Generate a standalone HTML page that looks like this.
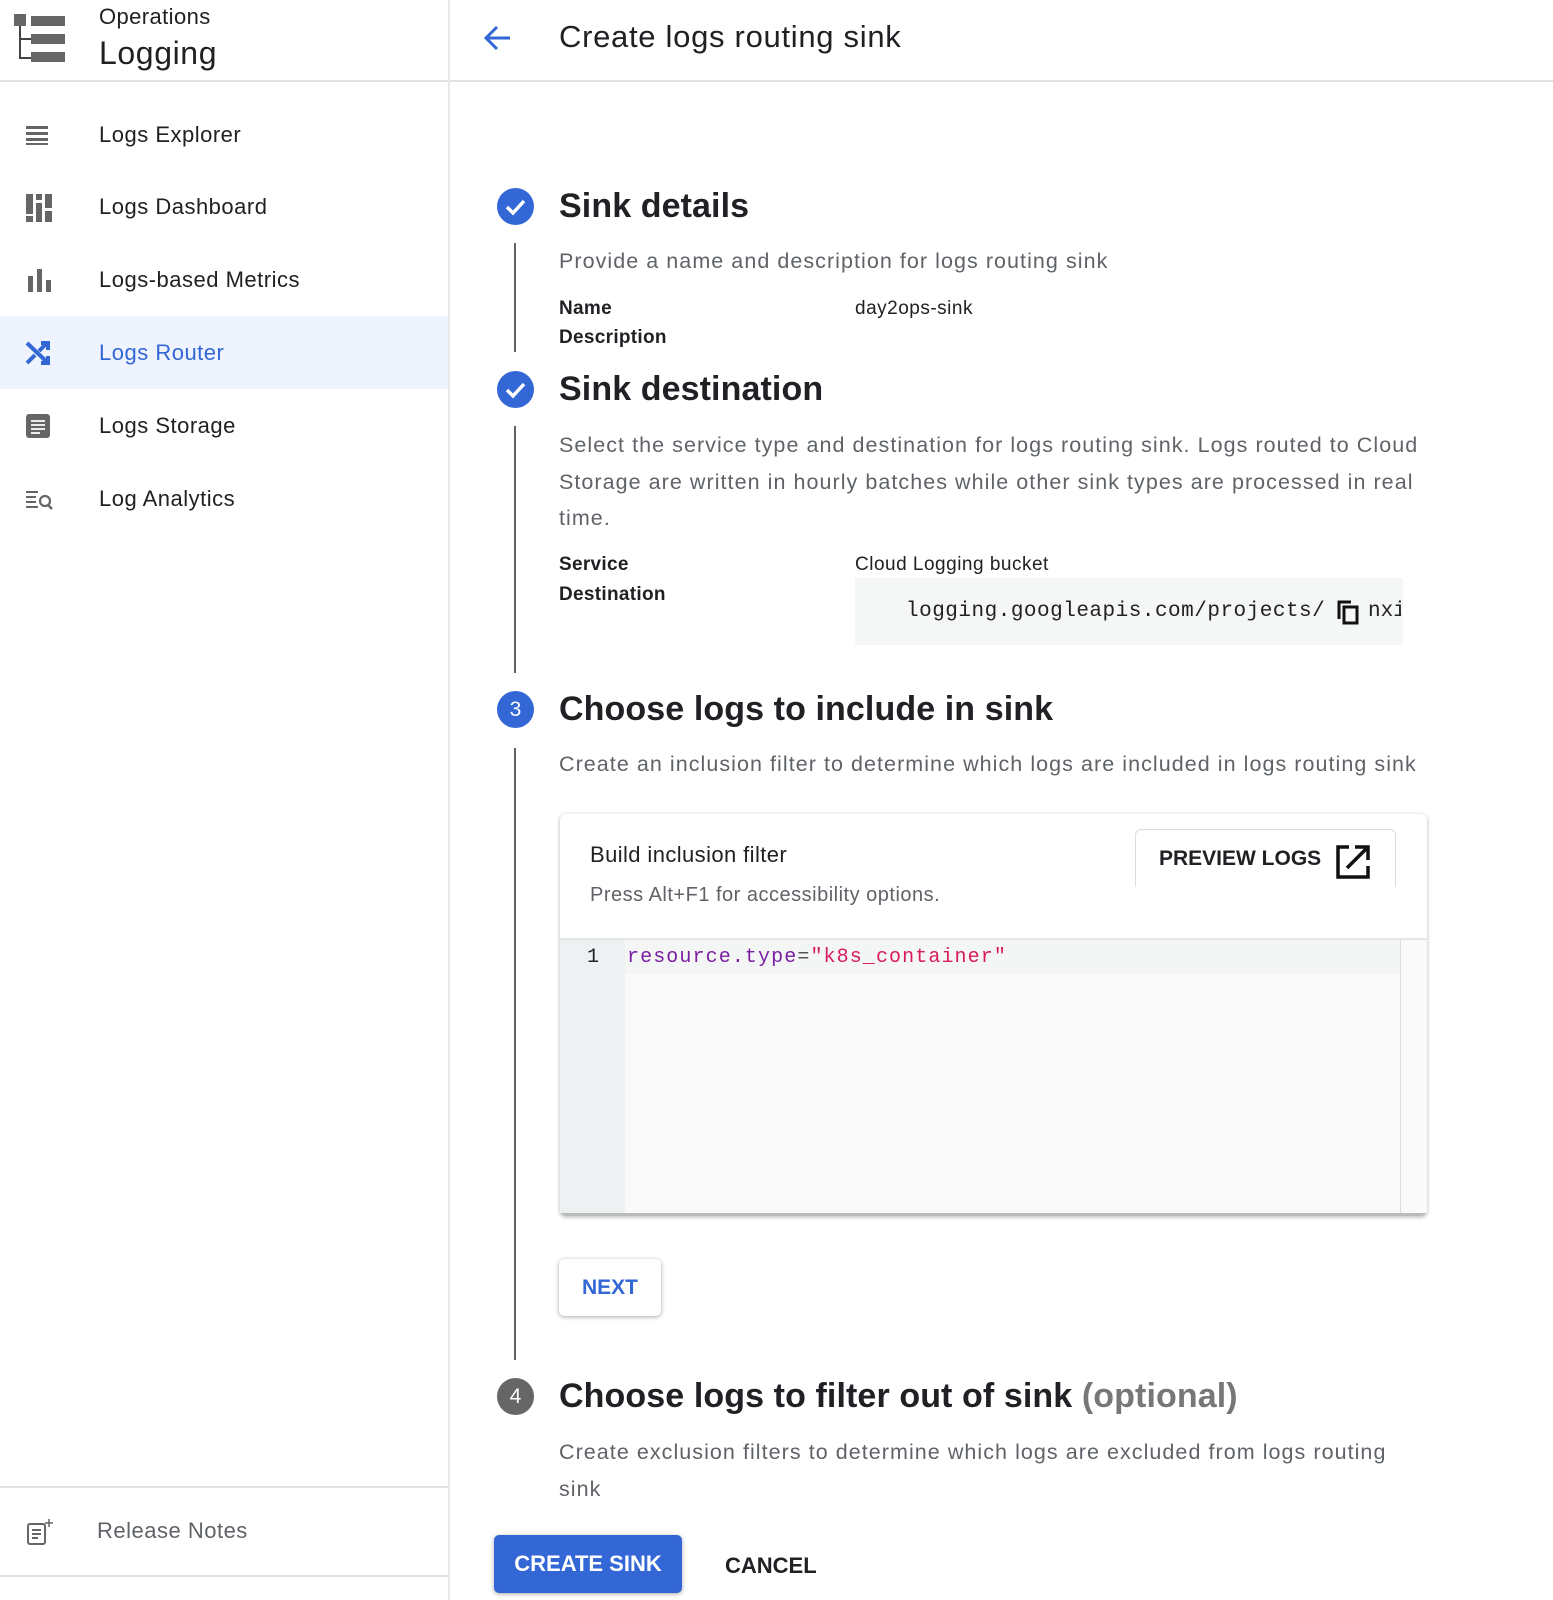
<!DOCTYPE html>
<html><head><meta charset="utf-8"><style>
*{margin:0;padding:0;box-sizing:border-box}
body{width:1553px;height:1600px;background:#fff;font-family:"Liberation Sans",sans-serif;color:#202124;position:relative;overflow:hidden}
.a{position:absolute;white-space:nowrap}
.nav{position:absolute;left:0;width:448px;height:73px;font-size:22px;letter-spacing:0.5px}
.nav span{position:absolute;left:99px;top:50%;transform:translateY(-50%)}
.nav svg{position:absolute;left:24px;top:50%;transform:translateY(-50%)}
.h{font-size:34px;font-weight:bold;color:#202124;letter-spacing:0.1px}
.p{font-size:21.5px;color:#5f6368;letter-spacing:1.05px}
.l{font-size:19px;font-weight:bold;color:#202124;letter-spacing:0.3px}
.v{font-size:19px;color:#202124;letter-spacing:0.5px}
.circ{position:absolute;width:37px;height:37px;border-radius:50%;background:#3367d6;left:497px}
.vl{position:absolute;left:514px;width:1.5px;background:#5f6368}
</style></head><body>
<div class="a" style="left:0;top:0;width:1553px;height:82px;border-bottom:2px solid #e0e0e0"></div>
<div class="a" style="left:448px;top:0;width:2px;height:1600px;background:#e8e8e8"></div>
<svg class="a" style="left:14px;top:14px" width="52" height="50"><rect x="0" y="0" width="12" height="12" fill="#666"/><rect x="17" y="2" width="34" height="10" fill="#666"/><rect x="17" y="20" width="34" height="10" fill="#666"/><rect x="17" y="38" width="34" height="10" fill="#666"/><path d="M6 12V44H17M6 25H17" stroke="#444" stroke-width="2" fill="none"/></svg>
<div class="a" style="left:99px;top:4px;font-size:22px;letter-spacing:0.4px">Operations</div>
<div class="a" style="left:99px;top:35px;font-size:32px;letter-spacing:0.6px">Logging</div>
<svg class="a" style="left:482px;top:24px" width="32" height="28"><path d="M28 14H5M15 3L4 14L15 25" stroke="#3367d6" stroke-width="3" fill="none"/></svg>
<div class="a" style="left:559px;top:19px;font-size:31px;letter-spacing:0.7px">Create logs routing sink</div>

<div class="nav" style="top:98px"><svg width="26" height="22"><rect x="2" y="2" width="22" height="3" fill="#666"/><rect x="2" y="8" width="22" height="3" fill="#666"/><rect x="2" y="14" width="22" height="3" fill="#666"/><rect x="2" y="19" width="22" height="2" fill="#666"/></svg><span>Logs Explorer</span></div>
<div class="nav" style="top:170px"><svg width="30" height="30"><rect x="2" y="2" width="7" height="20" fill="#666"/><rect x="2" y="24" width="7" height="6" fill="#666"/><rect x="12" y="2" width="6" height="6" fill="#666"/><rect x="12" y="11" width="6" height="19" fill="#666"/><rect x="21" y="2" width="7" height="14" fill="#666"/><rect x="21" y="19" width="7" height="11" fill="#666"/></svg><span>Logs Dashboard</span></div>
<div class="nav" style="top:243px"><svg width="28" height="24"><rect x="4" y="8" width="5" height="16" fill="#666"/><rect x="13" y="1" width="5" height="23" fill="#666"/><rect x="22" y="12" width="5" height="12" fill="#666"/></svg><span>Logs-based Metrics</span></div>
<div class="nav" style="top:316px;background:#eef3fd;color:#3367d6"><svg width="28" height="28"><path d="M3 4L24 24M3 24L11 16M15 12L22 5M17 4H24V11M17 24H24V17" stroke="#3367d6" stroke-width="4" fill="none"/></svg><span>Logs Router</span></div>
<div class="nav" style="top:389px"><svg width="28" height="28"><rect x="2" y="2" width="24" height="24" rx="3" fill="#666"/><path d="M7 9H21M7 13H21M7 17H21M7 21H16" stroke="#fff" stroke-width="1.8"/></svg><span>Logs Storage</span></div>
<div class="nav" style="top:462px"><svg width="30" height="24"><path d="M2 5H14M2 10H12M2 15H12M2 20H14" stroke="#666" stroke-width="2"/><circle cx="21" cy="14" r="5" stroke="#666" stroke-width="2.2" fill="none"/><path d="M24 18L28 22" stroke="#666" stroke-width="2.5"/></svg><span>Log Analytics</span></div>
<div class="a" style="left:0;top:1486px;width:448px;height:2px;background:#e0e0e0"></div>
<div class="a" style="left:0;top:1575px;width:448px;height:2px;background:#e0e0e0"></div>
<svg class="a" style="left:26px;top:1518px" width="28" height="28"><rect x="2" y="6" width="17" height="20" rx="2" stroke="#666" stroke-width="2" fill="none"/><path d="M6 12H15M6 16H15M6 20H12" stroke="#666" stroke-width="2"/><path d="M23 1V9M19 5H27" stroke="#666" stroke-width="1.5"/></svg>
<div class="a" style="left:97px;top:1518px;font-size:22px;color:#5f6368;letter-spacing:0.5px">Release Notes</div>

<div class="circ" style="top:188px"><svg width="37" height="37"><path d="M10 19L16 25L27 13" stroke="#fff" stroke-width="3.5" fill="none"/></svg></div>
<div class="a h" style="left:559px;top:187px">Sink details</div>
<div class="vl" style="top:243px;height:109px"></div>
<div class="a p" style="left:559px;top:249px">Provide a name and description for logs routing sink</div>
<div class="a l" style="left:559px;top:298px">Name</div>
<div class="a v" style="left:855px;top:298px">day2ops-sink</div>
<div class="a l" style="left:559px;top:327px">Description</div>

<div class="circ" style="top:371px"><svg width="37" height="37"><path d="M10 19L16 25L27 13" stroke="#fff" stroke-width="3.5" fill="none"/></svg></div>
<div class="a h" style="left:559px;top:370px">Sink destination</div>
<div class="vl" style="top:426px;height:247px"></div>
<div class="a p" style="left:559px;top:427px;line-height:36.7px">Select the service type and destination for logs routing sink. Logs routed to Cloud<br>Storage are written in hourly batches while other sink types are processed in real<br>time.</div>
<div class="a l" style="left:559px;top:554px">Service</div>
<div class="a l" style="left:559px;top:584px">Destination</div>
<div class="a v" style="left:855px;top:554px">Cloud Logging bucket</div>
<div class="a" style="left:855px;top:578px;width:548px;height:67px;background:#f5f6f6"></div>
<div class="a" style="left:906px;top:600px;font-family:'Liberation Mono',monospace;font-size:21px;letter-spacing:0.5px">logging.googleapis.com/projects/</div>
<svg class="a" style="left:1336px;top:599px" width="24" height="26"><path d="M3 20V3H15" stroke="#111" stroke-width="3" fill="none"/><rect x="8" y="8" width="13" height="16" stroke="#111" stroke-width="3" fill="none"/></svg>
<div class="a" style="left:1368px;top:600px;font-family:'Liberation Mono',monospace;font-size:21px;width:33px;overflow:hidden">nxi</div>

<div class="circ" style="top:691px;font-size:21px;color:#fff;text-align:center;line-height:37px">3</div>
<div class="a h" style="left:559px;top:690px">Choose logs to include in sink</div>
<div class="vl" style="top:748px;height:612px"></div>
<div class="a p" style="left:559px;top:752px">Create an inclusion filter to determine which logs are included in logs routing sink</div>
<div class="a" style="left:560px;top:814px;width:867px;height:402px;border-radius:6px;box-shadow:0 1px 4px rgba(0,0,0,.3);background:#fff;overflow:hidden">
 <div class="a" style="left:30px;top:28px;font-size:22px;letter-spacing:0.4px">Build inclusion filter</div>
 <div class="a" style="left:30px;top:70px;font-size:20px;color:#5f6368;letter-spacing:0.5px">Press Alt+F1 for accessibility options.</div>
 <div class="a" style="left:575px;top:15px;width:261px;height:58px;border:1px solid #dadce0;border-bottom:none;border-radius:6px 6px 0 0;font-size:21px;font-weight:bold;padding:17px 0 0 23px">PREVIEW LOGS</div>
 <svg class="a" style="left:775px;top:30px" width="36" height="36"><path d="M14 3H3V33H33V22" stroke="#111" stroke-width="3.5" fill="none"/><path d="M12 24L31 5M20 3H33V16" stroke="#111" stroke-width="3.5" fill="none"/></svg>
 <div class="a" style="left:0;top:124px;width:867px;height:278px;background:#fafafa;border-top:2px solid #e6e6e6"></div>
 <div class="a" style="left:0;top:126px;width:65px;height:276px;background:#eef1f1"></div>
 <div class="a" style="left:65px;top:126px;width:775px;height:34px;background:#f4f5f5"></div>
 <div class="a" style="left:840px;top:126px;width:1px;height:276px;background:#ddd"></div>
 <div class="a" style="left:27px;top:132px;font-family:'Liberation Mono',monospace;font-size:20px">1</div>
 <div class="a" style="left:67px;top:132px;font-family:'Liberation Mono',monospace;font-size:20px;letter-spacing:1.1px;color:#7b1fa2">resource.type<span style="color:#555">=</span><span style="color:#d81b60">"k8s_container"</span></div>
 <div class="a" style="left:0;top:399px;width:867px;height:3px;background:#bbb"></div>
</div>
<div class="a" style="left:559px;top:1259px;width:102px;height:57px;border-radius:5px;box-shadow:0 1px 4px rgba(0,0,0,.35);background:#fff;color:#3367d6;font-size:21px;font-weight:bold;text-align:center;line-height:57px">NEXT</div>

<div class="circ" style="top:1378px;background:#666;font-size:21px;color:#fff;text-align:center;line-height:37px">4</div>
<div class="a h" style="left:559px;top:1377px">Choose logs to filter out of sink <span style="color:#777">(optional)</span></div>
<div class="a p" style="left:559px;top:1434px;line-height:37px">Create exclusion filters to determine which logs are excluded from logs routing<br>sink</div>
<div class="a" style="left:494px;top:1535px;width:188px;height:58px;border-radius:5px;background:#3367d6;box-shadow:0 1px 4px rgba(0,0,0,.35);color:#fff;font-size:22px;font-weight:bold;text-align:center;line-height:58px">CREATE SINK</div>
<div class="a" style="left:725px;top:1553px;font-size:22px;font-weight:bold">CANCEL</div>
</body></html>
